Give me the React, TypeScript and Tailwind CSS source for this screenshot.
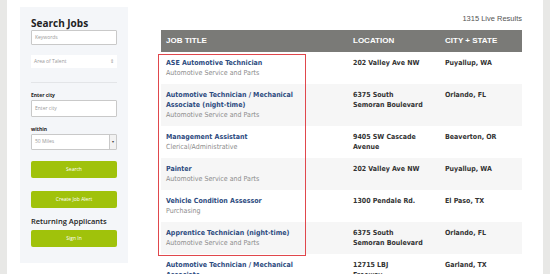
import React from "react";

type Job = {
  title: string[];
  dept: string;
  location: string[];
  city: string;
};

const JOBS: Job[] = [
  {
    title: ["ASE Automotive Technician"],
    dept: "Automotive Service and Parts",
    location: ["202 Valley Ave NW"],
    city: "Puyallup, WA",
  },
  {
    title: ["Automotive Technician / Mechanical", "Associate (night-time)"],
    dept: "Automotive Service and Parts",
    location: ["6375 South", "Semoran Boulevard"],
    city: "Orlando, FL",
  },
  {
    title: ["Management Assistant"],
    dept: "Clerical/Administrative",
    location: ["9405 SW Cascade", "Avenue"],
    city: "Beaverton, OR",
  },
  {
    title: ["Painter"],
    dept: "Automotive Service and Parts",
    location: ["202 Valley Ave NW"],
    city: "Puyallup, WA",
  },
  {
    title: ["Vehicle Condition Assessor"],
    dept: "Purchasing",
    location: ["1300 Pendale Rd."],
    city: "El Paso, TX",
  },
  {
    title: ["Apprentice Technician (night-time)"],
    dept: "Automotive Service and Parts",
    location: ["6375 South", "Semoran Boulevard"],
    city: "Orlando, FL",
  },
  {
    title: ["Automotive Technician / Mechanical", "Associate"],
    dept: "Automotive Service and Parts",
    location: ["12715 LBJ", "Freeway"],
    city: "Garland, TX",
  },
];

const sideFont = { fontFamily: '"Open Sans", Arial, sans-serif' };

function GreenButton({ label, className = "" }: { label: string; className?: string }) {
  return (
    <div
      className={`flex h-[17px] items-center justify-center rounded-[2px] bg-[#a0c20b] text-[5px] text-white ${className}`}
    >
      {label}
    </div>
  );
}

function Sidebar() {
  return (
    <div
      className="ml-[13px] mt-[7px] h-[256px] w-[108px] shrink-0 bg-[#f4f6f9] px-[11px] pt-[10px]"
      style={sideFont}
    >
      <h2 className="text-[10px] font-bold leading-[12px] text-[#222]">Search Jobs</h2>
      <div className="mt-[1px] flex h-[15px] items-center rounded-[1px] border border-[#c9c9c9] bg-white px-[3px] text-[5px] text-[#999]">
        Keywords
      </div>
      <div className="mt-[10px] flex h-[13px] items-center justify-between bg-white px-[3px] text-[5px] text-[#999]">
        <span>Area of Talent</span>
        <span className="text-[5px]">⇕</span>
      </div>
      <div className="mt-[14px] h-px bg-[#e3e5e8]" />
      <div className="mt-[9px] text-[5px] font-bold leading-[7px] text-[#222]">Enter city</div>
      <div className="mt-[1px] flex h-[17px] items-center rounded-[1px] border border-[#c9c9c9] bg-white px-[3px] text-[5px] text-[#999]">
        Enter city
      </div>
      <div className="mt-[9px] text-[5px] font-bold leading-[7px] text-[#222]">within</div>
      <div className="mt-[1px] flex h-[16px] items-center justify-between rounded-[1px] border border-[#c9c9c9] bg-white pl-[3px] text-[5px] text-[#999]">
        <span>50 Miles</span>
        <span className="flex h-full w-[7px] items-center justify-center border-l border-[#c9c9c9] bg-[#f2f2f2] text-[4px] text-[#444]">
          ▾
        </span>
      </div>
      <GreenButton label="Search" className="mt-[11px]" />
      <GreenButton label="Create Job Alert" className="mt-[13px]" />
      <div className="mt-[8px] text-[7.5px] font-semibold leading-[10px] text-[#222]">
        Returning Applicants
      </div>
      <GreenButton label="Sign In" className="mt-[4px]" />
    </div>
  );
}

function JobRow({ job, shaded }: { job: Job; shaded: boolean }) {
  return (
    <div
      className={`grid grid-cols-[187px_92px_1fr] py-[6px] text-[7px] leading-[10px] ${
        shaded ? "bg-[#f6f6f6]" : "bg-white"
      }`}
    >
      <div className="pl-[5px]">
        {job.title.map((t) => (
          <div key={t} className="font-bold text-[#2d4b80]">
            {t}
          </div>
        ))}
        <div className="text-[#8c8c8c]">{job.dept}</div>
      </div>
      <div className="pl-[5px] font-bold text-[#333]">
        {job.location.map((l) => (
          <div key={l}>{l}</div>
        ))}
      </div>
      <div className="pl-[5px] font-bold text-[#333]">{job.city}</div>
    </div>
  );
}

function Results() {
  return (
    <div className="ml-[33px] w-[361px] shrink-0">
      <div
        className="mt-[14px] h-[16px] text-right text-[7.5px] leading-[10px] text-[#555]"
        style={{ fontFamily: '"Liberation Sans", Arial, sans-serif' }}
      >
        1315 Live Results
      </div>
      <div className="relative" style={{ fontFamily: '"DejaVu Sans Condensed", "DejaVu Sans", Verdana, sans-serif' }}>
        <div
          className="grid h-[22px] grid-cols-[187px_92px_1fr] items-center bg-[#7a7a77] text-[8px] font-bold text-white"
          style={{ fontFamily: '"Liberation Sans", Arial, sans-serif' }}
        >
          <div className="pl-[5px]">JOB TITLE</div>
          <div className="pl-[5px]">LOCATION</div>
          <div className="pl-[5px]">CITY + STATE</div>
        </div>
        {JOBS.map((job, i) => (
          <JobRow key={i} job={job} shaded={i % 2 === 1} />
        ))}
        <div className="pointer-events-none absolute left-[-3px] top-[24px] h-[202px] w-[148px] border border-[#e0474c]" />
      </div>
    </div>
  );
}

export default function App() {
  return (
    <div className="flex h-[274px] w-[550px] overflow-hidden bg-white">
      <div className="w-[7px] shrink-0 bg-[#e8e8e6]" />
      <Sidebar />
      <Results />
      <div className="flex-1" />
      <div className="w-[7px] shrink-0 bg-[#e8e8e6]" />
    </div>
  );
}
